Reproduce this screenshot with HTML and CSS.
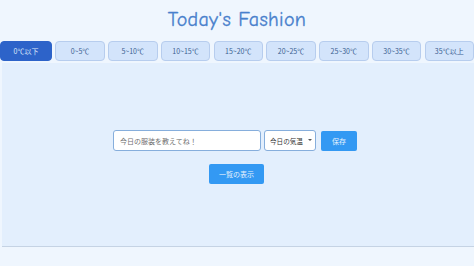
FILE: index.html
```html
<!DOCTYPE html>
<html lang="ja">
<head>
<meta charset="utf-8">
<link rel="stylesheet" href="styles.css">
</head>
<body>
<header class="header">
  <h1 class="title">Today's Fashion</h1>
</header>
<nav class="tabs">
  <button class="tab tab-active">0℃以下</button>
  <button class="tab">0~5℃</button>
  <button class="tab">5~10℃</button>
  <button class="tab">10~15℃</button>
  <button class="tab">15~20℃</button>
  <button class="tab">20~25℃</button>
  <button class="tab">25~30℃</button>
  <button class="tab">30~35℃</button>
  <button class="tab">35℃以上</button>
</nav>
<main class="main">
  <div class="form-row">
    <input class="text-input" type="text" placeholder="今日の服装を教えてね！">
    <span class="select-wrap">
      <select class="select">
        <option>今日の気温</option>
      </select>
    </span>
    <button class="btn btn-save">保存</button>
  </div>
  <div class="list-row">
    <button class="btn btn-list">一覧の表示</button>
  </div>
</main>
<footer class="footer"></footer>
</body>
</html>
```
FILE: styles.css
```css
html, body {
  margin: 0;
  padding: 0;
}
body {
  background: #eff6fe;
  font-family: "Noto Sans CJK JP", "Noto Sans", sans-serif;
  width: 474px;
  height: 266px;
  overflow: hidden;
}
.header {
  height: 38px;
  display: flex;
  align-items: center;
  justify-content: center;
}
.title {
  margin: 0;
  font-family: "Comic Sans MS", "Comic Neue", "DejaVu Sans", sans-serif;
  font-weight: normal;
  font-size: 20px;
  color: #4880cc;
  letter-spacing: 0.3px;
  -webkit-text-stroke: 0.3px #4880cc;
}
.tabs {
  display: flex;
  gap: 3.25px;
  padding: 3px 0 2px 0;
  height: 20px;
}
.tab {
  width: 49.5px;
  flex: none;
  height: 20px;
  padding: 0;
  border: 1px solid #b7cdee;
  border-radius: 4px;
  background: #d3e4fb;
  color: #3b5f91;
  font-family: "Noto Sans CJK JP", sans-serif;
  font-size: 7px;
  line-height: 18px;
}
.tab-active {
  width: 52px;
  background: #2d63c9;
  border-color: #2d63c9;
  color: #dfe9fb;
}
.main {
  margin-left: 2px;
  background: #e3effd;
  height: 184px;
  border-bottom: 1px solid #c5d3e4;
  display: flex;
  flex-direction: column;
  align-items: center;
  padding-top: 67px;
  box-sizing: border-box;
}
.form-row {
  display: flex;
  align-items: center;
  margin-right: 6px;
}
.text-input {
  width: 148px;
  height: 21px;
  box-sizing: border-box;
  border: 1px solid #86aedc;
  border-radius: 3px;
  background: #fff;
  padding: 0 6px;
  font-family: "Noto Sans CJK JP", sans-serif;
  font-size: 7px;
  color: #555;
}
.text-input::placeholder {
  color: #6f6f6f;
}
.select-wrap {
  position: relative;
  margin-left: 3px;
  display: flex;
}
.select-wrap::after {
  content: "";
  position: absolute;
  right: 4px;
  top: 9px;
  border-left: 2px solid transparent;
  border-right: 2px solid transparent;
  border-top: 2.5px solid #555;
  pointer-events: none;
}
.select {
  -webkit-appearance: none;
  appearance: none;
  width: 52px;
  height: 21px;
  box-sizing: border-box;
  border: 1px solid #86aedc;
  border-radius: 3px;
  background: #fff;
  font-family: "Noto Sans CJK JP", sans-serif;
  font-size: 6.6px;
  color: #333;
  padding: 0 0 0 5px;
  margin: 0;
}
.btn {
  border: none;
  border-radius: 2px;
  background: #3399f3;
  color: #e6f1fd;
  font-family: "Noto Sans CJK JP", sans-serif;
  font-size: 7px;
  padding: 0;
}
.btn-save {
  width: 36px;
  height: 20px;
  margin-left: 5px;
}
.list-row {
  margin-top: 7px;
  margin-right: 3px;
}
.btn-list {
  width: 55px;
  height: 20px;
}
.footer {
  height: 20px;
}
```
